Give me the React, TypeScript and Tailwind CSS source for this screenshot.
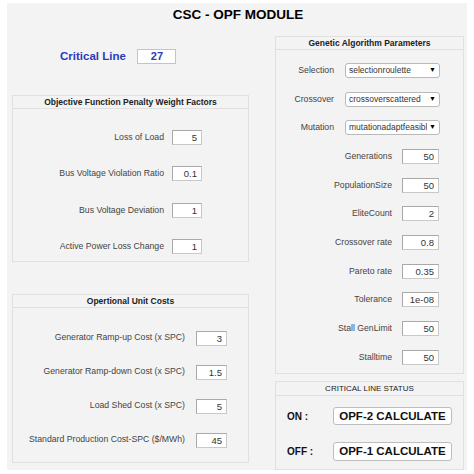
import React from "react"

const font = { fontFamily: '"Liberation Sans", Arial, sans-serif' }

function NumBox({ value, w = "w-[30px]" }: { value: string; w?: string }) {
  return (
    <div className={`${w} h-[15px] bg-white border border-[#c9c9c9] border-t-[#a9a9a9] border-l-[#a9a9a9] text-right pr-[4px] text-[9.5px] leading-[13px] text-[#333]`}>
      {value}
    </div>
  )
}

function Panel({ title, className, children }: { title: string; className: string; children: React.ReactNode }) {
  return (
    <div className={`border border-[#e0e0e0] bg-[#f3f3f3] flex flex-col ${className}`}>
      <div className="h-[13px] border-b border-[#e0e0e0] text-center text-[8.5px] font-bold leading-[12px] text-[#222]">{title}</div>
      {children}
    </div>
  )
}

export default function App() {
  const objective = [
    { label: "Loss of Load", value: "5" },
    { label: "Bus Voltage Violation Ratio", value: "0.1" },
    { label: "Bus Voltage Deviation", value: "1" },
    { label: "Active Power Loss Change", value: "1" },
  ]
  const costs = [
    { label: "Generator Ramp-up Cost (x SPC)", value: "3" },
    { label: "Generator Ramp-down Cost (x SPC)", value: "1.5" },
    { label: "Load Shed Cost (x SPC)", value: "5" },
    { label: "Standard Production Cost-SPC ($/MWh)", value: "45" },
  ]
  const selects = [
    { label: "Selection", value: "selectionroulette" },
    { label: "Crossover", value: "crossoverscattered" },
    { label: "Mutation", value: "mutationadaptfeasibl" },
  ]
  const params = [
    { label: "Generations", value: "50" },
    { label: "PopulationSize", value: "50" },
    { label: "EliteCount", value: "2" },
    { label: "Crossover rate", value: "0.8" },
    { label: "Pareto rate", value: "0.35" },
    { label: "Tolerance", value: "1e-08" },
    { label: "Stall GenLimit", value: "50" },
    { label: "Stalltime", value: "50" },
  ]

  return (
    <div className="w-[474px] h-[474px] bg-white pt-[3px] pl-[7px]" style={font}>
      <div className="w-[460px] h-[467px] bg-[#f3f3f3] pl-[5px] pr-[3px] flex flex-col">
        <div className="h-[31px] text-center text-[13.5px] font-bold text-black leading-[24px]">CSC - OPF MODULE</div>

        <div className="flex gap-[26px]">
          {/* left column */}
          <div className="w-[237px] flex flex-col">
            <div className="mt-[16px] h-[15px] flex items-center">
              <span className="ml-[48px] text-[11.5px] font-bold text-[#2b3bb8]">Critical Line</span>
              <div className="ml-[11px] w-[39px] h-[15px] bg-white border border-[#c4c4c4] text-[11px] font-bold text-[#2b3bb8] leading-[13px] pl-[13px]">27</div>
            </div>

            <Panel title="Objective Function Penalty Weight Factors" className="mt-[31px] h-[167px]">
              <div className="flex flex-col pt-[10px]">
                {objective.map((r) => (
                  <div key={r.label} className="h-[36.5px] flex items-center justify-end pr-[46px] gap-[8px]">
                    <span className="text-[8.7px] text-[#444]">{r.label}</span>
                    <NumBox value={r.value} />
                  </div>
                ))}
              </div>
            </Panel>

            <Panel title="Opertional Unit Costs" className="mt-[32px] h-[169px]">
              <div className="flex flex-col pt-[13px]">
                {costs.map((r) => (
                  <div key={r.label} className="h-[34px] flex items-center justify-end pr-[21px] gap-[11px]">
                    <span className="text-[8.7px] text-[#444]">{r.label}</span>
                    <NumBox value={r.value} w="w-[31px]" />
                  </div>
                ))}
              </div>
            </Panel>
          </div>

          {/* right column */}
          <div className="w-[189px] flex flex-col">
            <Panel title="Genetic Algorithm Parameters" className="mt-[3px] h-[338px]">
              <div className="flex flex-col pt-[6px]">
                {selects.map((s) => (
                  <div key={s.label} className="h-[28.7px] flex items-center justify-end pr-[23px] gap-[11px]">
                    <span className="text-[8.7px] text-[#444]">{s.label}</span>
                    <div className="w-[95px] h-[15px] bg-white border border-[#b9b9b9] rounded-[3px] flex items-center justify-between pl-[3px] pr-[3px]">
                      <span className="text-[8.5px] text-[#333] whitespace-nowrap overflow-hidden">{s.value}</span>
                      <span className="text-[7px] text-black">▼</span>
                    </div>
                  </div>
                ))}
                {params.map((p) => (
                  <div key={p.label} className="h-[28.7px] flex items-center justify-end pr-[24px] gap-[10px]">
                    <span className="text-[8.7px] text-[#444]">{p.label}</span>
                    <NumBox value={p.value} w="w-[37px]" />
                  </div>
                ))}
              </div>
            </Panel>

            <div className="mt-[7px] h-[89px] border border-[#e0e0e0] flex flex-col">
              <div className="h-[14px] border-b border-[#e0e0e0] text-center text-[8px] leading-[13px] text-[#222]">CRITICAL LINE STATUS</div>
              <div className="flex items-center h-[18px] mt-[11px]">
                <span className="ml-[11px] w-[46px] text-[10px] font-bold text-[#111]">ON :</span>
                <div className="w-[119px] h-[18px] bg-white border border-[#bdbdbd] rounded-[3px] text-center text-[11.5px] font-bold text-[#111] leading-[16px]">OPF-2 CALCULATE</div>
              </div>
              <div className="flex items-center h-[19px] mt-[17px]">
                <span className="ml-[11px] w-[46px] text-[10px] font-bold text-[#111]">OFF :</span>
                <div className="w-[119px] h-[19px] bg-white border border-[#bdbdbd] rounded-[3px] text-center text-[11.5px] font-bold text-[#111] leading-[17px]">OPF-1 CALCULATE</div>
              </div>
            </div>
          </div>
        </div>
      </div>
    </div>
  )
}
